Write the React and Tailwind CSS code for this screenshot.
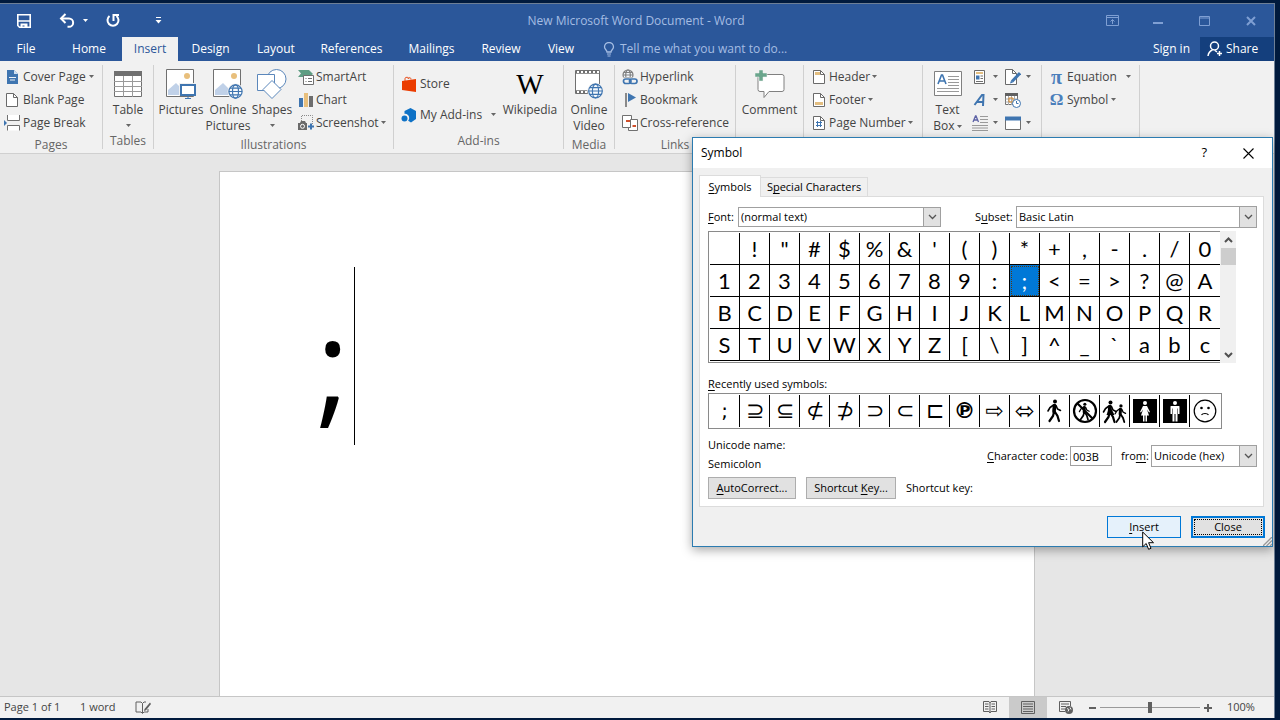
import React from "react";

const Svg = ({ w = 16, h = 16, vb, children, className = "" }) => (
  <svg width={w} height={h} viewBox={vb || `0 0 ${w} ${h}`} fill="none" aria-hidden="true" className={`shrink-0 ${className}`}>
    {children}
  </svg>
);

const Caret = ({ className = "" }) => (
  <Svg w={5} h={3} className={className}>
    <path d="M0 0h5L2.500 3z" fill="currentColor" />
  </Svg>
);

const Chevron = () => (
  <Svg w={9} h={6}>
    <path d="M1 1l3.500 3.500L8 1" stroke="#555" strokeWidth="1.300" />
  </Svg>
);

/* ---------- title bar icons ---------- */
const SaveIcon = () => (
  <Svg>
    <path d="M1.800 1.800h12.400v12.400H3.500L1.800 12.500z" stroke="#fff" strokeWidth="1.600" />
    <path d="M2 8h12" stroke="#fff" strokeWidth="1.500" />
    <path d="M4.500 10.500h7V15h-3v-2.500h-2V15h-2z" fill="#fff" />
  </Svg>
);
const UndoIcon = () => (
  <Svg>
    <path d="M2 5.500h8a4 4 0 0 1 0 8.300H8.500" stroke="#fff" strokeWidth="2" />
    <path d="M6.500 1L2 5.500 6.500 10" stroke="#fff" strokeWidth="2" />
  </Svg>
);
const RedoIcon = () => (
  <Svg>
    <path d="M4.500 3A5.500 5.500 0 1 0 11.500 3" stroke="#fff" strokeWidth="2" />
    <path d="M8.500 8V2H14" stroke="#fff" strokeWidth="2" />
  </Svg>
);
const CustomizeIcon = () => (
  <Svg w={7} h={7}>
    <path d="M1 .5h5" stroke="#fff" />
    <path d="M.5 3h6L3.500 6.500z" fill="#fff" />
  </Svg>
);

/* ---------- small ribbon icons ---------- */
const PageShape = ({ children }) => (
  <Svg>
    <path d="M2.500 1.500h7l4 4v9h-11z" fill="#fff" stroke="#6a6a6a" />
    <path d="M9.500 1.500v4h4" stroke="#6a6a6a" />
    {children}
  </Svg>
);
const CoverIcon = () => (
  <Svg>
    <path d="M3 1h7l4 4v10H3z" fill="#3f75b0" />
    <path d="M10 1v4h4z" fill="#cfe0f2" />
    <path d="M5 8l1 1 1-1 1 1 1-1 1 1 1-1 1 1M6 11h5" stroke="#fff" strokeWidth=".9" />
  </Svg>
);
const BreakIcon = () => (
  <Svg>
    <path d="M3.500 0v5.500h12V0M3.500 15.500v-5h12v5" stroke="#707070" fill="#fff" />
    <path d="M0 5l3 3-3 3z" fill="#3f75b0" />
  </Svg>
);
const SmartArtIcon = () => (
  <Svg>
    <path d="M0 1h11l4 4-4 3H0l3-3.500z" fill="#5f9d83" />
    <path d="M5.500 6.500h10v9h-10z" fill="#fff" stroke="#707070" />
    <path d="M7.500 9.500h1M10 9.500h4M7.500 12.500h1M10 12.500h4" stroke="#707070" />
  </Svg>
);
const ChartIcon = () => (
  <Svg>
    <path d="M1 6h4v9H1z" fill="#3f75b0" />
    <path d="M6 1h4v14H6z" fill="#e8bf7c" />
    <path d="M11 4h4v11h-4z" fill="#6d6d6d" />
  </Svg>
);
const ScreenshotIcon = () => (
  <Svg>
    <path d="M3.500 6V.5h11V9" stroke="#8a8a8a" strokeDasharray="1 1" />
    <path d="M0 8h2l1-2h4l1 2h1v7H0z" fill="#6a6a6a" />
    <circle cx="4.500" cy="11.300" r="2" stroke="#fff" />
    <path d="M13 8.500v6M10 11.500h6" stroke="#3f75b0" strokeWidth="2" />
  </Svg>
);
const StoreIcon = () => (
  <Svg>
    <path d="M4 5V2.500C4 .8 8 .8 8 3M7 3c.5-2 3-2 3 .5" stroke="#e8501e" />
    <path d="M1 5l14-2v13L1 14z" fill="#eb3c00" />
  </Svg>
);
const AddinsIcon = () => (
  <Svg>
    <path d="M9.500 1L15 4v8l-5 3.500-4-2.500V9.500L3.500 8V4z" fill="#0f72c6" />
    <circle cx="4" cy="11" r="4.200" fill="#f1f1f1" />
    <circle cx="3.500" cy="11.500" r="3" fill="#0f72c6" />
  </Svg>
);
const Globe = ({ cx, cy, r, color = "#3f75b0" }) => (
  <g stroke={color} strokeWidth="1.200">
    <circle cx={cx} cy={cy} r={r} fill="#f4f8fc" />
    <ellipse cx={cx} cy={cy} rx={r / 2.2} ry={r} />
    <path d={`M${cx - r} ${cy}h${2 * r}M${cx - r * 0.85} ${cy - r / 2}h${r * 1.7}M${cx - r * 0.85} ${cy + r / 2}h${r * 1.7}`} />
  </g>
);
const HyperlinkIcon = () => (
  <Svg>
    <Globe cx={6} cy={6} r={5} color="#808080" />
    <rect x="0" y="8.500" width="16" height="7.500" fill="#f1f1f1" />
    <rect x="1.500" y="10" width="7.500" height="4.500" rx="2.200" stroke="#3f75b0" strokeWidth="1.700" />
    <rect x="7.500" y="10" width="7.500" height="4.500" rx="2.200" stroke="#3f75b0" strokeWidth="1.700" />
  </Svg>
);
const BookmarkIcon = () => (
  <Svg>
    <path d="M4 1v14" stroke="#707070" strokeWidth="1.600" />
    <path d="M6 1l8 4.500L6 10z" fill="#3f75b0" />
  </Svg>
);
const CrossRefIcon = () => (
  <Svg>
    <path d="M.5.500h9v12h-9z" fill="#fff" stroke="#707070" />
    <path d="M8.500 4.500h7v11h-9v-3h2z" fill="#fff" stroke="#707070" />
    <path d="M4 6h4M10.500 11h3.500" stroke="#d0502c" strokeWidth="2" />
  </Svg>
);
const HeaderIcon = () => (<PageShape><path d="M4 3h5v3H4z" fill="#e3be80" /></PageShape>);
const FooterIcon = () => (<PageShape><path d="M4 10h8v3H4z" fill="#e3be80" /></PageShape>);
const PageNumIcon = () => (<PageShape><path d="M6.500 6v6M9.500 6v6M5 7.500h6M5 10.500h6" stroke="#3f75b0" /></PageShape>);
const QuickPartsIcon = () => (
  <Svg>
    <path d="M2.500 1.500h10v13h-10z" fill="#fff" stroke="#6a6a6a" />
    <path d="M4 4h7" stroke="#e3be80" strokeWidth="2" />
    <path d="M4 6.500h3.500v4H4z" fill="#3f75b0" />
    <path d="M8.500 7H11M8.500 9.500H11M4 12.500h7" stroke="#707070" />
  </Svg>
);
const WordArtIcon = () => (
  <Svg>
    <path d="M2.500 13L10 3h1.500L11 14M5 10h6" stroke="#3f75b0" strokeWidth="2" />
  </Svg>
);
const DropCapIcon = () => (
  <Svg>
    <path d="M1 7l2.500-6h.5l2.500 6M2 5h4" stroke="#5d62a5" strokeWidth="1.300" />
    <path d="M8 1.500h8M8 4.500h8M8 7.500h8M0 10.500h16M0 13h16M0 15.500h16" stroke="#9a9a9a" />
  </Svg>
);
const SignatureIcon = () => (
  <Svg>
    <path d="M.5.500h7l4 4v11H.5z" fill="#fff" stroke="#6a6a6a" />
    <path d="M7.500.500v4h4" stroke="#6a6a6a" />
    <path d="M15 4L7 12.500" stroke="#3f75b0" strokeWidth="3" />
    <path d="M5 14.500l1-3 2 2z" fill="#3f75b0" />
  </Svg>
);
const DateIcon = () => (
  <Svg>
    <path d="M.5 1.500h12v11H.5z" fill="#fff" stroke="#707070" />
    <path d="M0 2.500h13" stroke="#606060" strokeWidth="3" />
    <path d="M.5 7h12M.5 10h12M3.500 4v9M6.500 4v9M9.500 4v9" stroke="#aaa" />
    <path d="M4 6h4v4H4z" stroke="#d98a2b" />
    <circle cx="11.500" cy="11.500" r="4" fill="#fff" stroke="#3f75b0" />
    <path d="M11.500 9v2.500h2" stroke="#3f75b0" />
  </Svg>
);
const ObjectIcon = () => (
  <Svg>
    <path d="M.5 2.500h15v12H.5z" fill="#fff" stroke="#707070" />
    <path d="M0 3.500h16" stroke="#3f75b0" strokeWidth="4" />
  </Svg>
);

/* ---------- large ribbon icons ---------- */
const TableIcon = () => (
  <Svg w={28} h={26}>
    <path d="M.5.500h27v25H.5z" fill="#fff" stroke="#707070" />
    <path d="M0 0h28v5H0z" fill="#707070" />
    <path d="M0 10.500h28M0 15.500h28M0 20.500h28M9.500 5v21M18.500 5v21" stroke="#9a9a9a" />
  </Svg>
);
const PhotoBase = () => (
  <>
    <path d="M.5.500h27v27H.5z" fill="#fff" stroke="#707070" />
    <circle cx="21" cy="7" r="3" fill="#e8bf7c" />
    <path d="M2 26v-5l8-7 5 5v7z" fill="#c0d1e8" />
  </>
);
const PicturesIcon = () => (
  <Svg w={30} h={30}>
    <PhotoBase />
    <path d="M13 14h17v13H13z" fill="#f1f1f1" />
    <path d="M15 16h14v10H15z" fill="#fff" stroke="#3f75b0" strokeWidth="2" />
    <path d="M22 27v2M19 29.500h6" stroke="#3f75b0" />
  </Svg>
);
const OnlinePicturesIcon = () => (
  <Svg w={30} h={30}>
    <PhotoBase />
    <circle cx="22.500" cy="22.500" r="8" fill="#f1f1f1" />
    <Globe cx={22.5} cy={22.5} r={6.6} />
  </Svg>
);
const ShapesIcon = () => (
  <Svg w={30} h={30}>
    <circle cx="19.500" cy="10" r="9.500" fill="#fff" stroke="#5b87bb" />
    <path d="M.5 5.500h17v16H.5z" fill="#fff" stroke="#5b87bb" />
    <path d="M15 11.500l9 9-9 9-9-9z" fill="#fff" stroke="#5b87bb" />
  </Svg>
);
const VideoIcon = () => (
  <Svg w={28} h={30}>
    <path d="M.5 1.500h24v23H.5z" fill="#fff" stroke="#707070" />
    <path d="M1 3h23M1 23h13" stroke="#707070" strokeWidth="3.500" />
    <path d="M2 3h23M2 23h13" stroke="#fff" strokeWidth="2" strokeDasharray="2 2" />
    <circle cx="20.500" cy="22" r="8.200" fill="#f1f1f1" />
    <Globe cx={20.5} cy={22} r={6.8} />
  </Svg>
);
const CommentIcon = () => (
  <Svg w={30} h={30}>
    <path d="M5 5.500h22a2 2 0 0 1 2 2v13a2 2 0 0 1-2 2H14l-5 6v-6H5a2 2 0 0 1-2-2v-13a2 2 0 0 1 2-2z" fill="#fff" stroke="#808080" />
    <path d="M4 1h4v3h4v4H8v4H4V8H0V4h4z" fill="#6aa58c" stroke="#f1f1f1" strokeWidth=".5" />
  </Svg>
);
const TextBoxIcon = () => (
  <Svg w={28} h={26}>
    <path d="M.5.500h27v24H.5z" fill="#fff" stroke="#808080" />
    <path d="M4 13l3.500-9h1L12 13M5.500 10h5" stroke="#3f75b0" strokeWidth="1.600" />
    <path d="M14 5.500h11M14 8.500h11M14 11.500h11M14 14.500h11M3 17.500h22M3 20.500h22" stroke="#9a9a9a" />
  </Svg>
);

/* ---------- ribbon building blocks ---------- */
const Group = ({ label, width, children }) => (
  <section className={`my-1 flex h-[84px] shrink-0 flex-col border-r border-[#d0d0d0] ${width}`}>
    <div className="flex h-[69px]">{children}</div>
    {label && <div className="mt-[3px] text-center leading-4 text-[#666]">{label}</div>}
  </section>
);

const Small = ({ icon, label, caret, gap = "gap-[2px]", h = "h-[23px]", caretGap = "ml-1" }) => (
  <button type="button" className={`flex items-center whitespace-nowrap leading-4 ${gap} ${h}`}>
    {icon}
    <span>{label}</span>
    {caret && <Caret className={`text-[#666] ${caretGap}`} />}
  </button>
);

const Big = ({ icon, lines, caret, caretInline, width }) => (
  <button type="button" className={`flex shrink-0 flex-col items-center leading-4 ${width}`}>
    <span className="flex h-[37px] items-center">{icon}</span>
    {lines.map((l, i) => (
      <span key={l} className="flex items-center gap-[2px] whitespace-nowrap">
        {l}
        {caretInline && i === lines.length - 1 && <Caret className="text-[#666]" />}
      </span>
    ))}
    {caret && <Caret className="mt-[6px] text-[#666]" />}
  </button>
);

const IconDrop = ({ icon, label, caret = true }) => (
  <button type="button" aria-label={label} className="flex h-[23px] items-center gap-[5px]">
    {icon}
    {caret && <Caret className="text-[#666]" />}
  </button>
);

const TABS = [
  ["Design", "w-[65px]"],
  ["Layout", "w-[66px]"],
  ["References", "w-[85px]"],
  ["Mailings", "w-[75px]"],
  ["Review", "w-[64px]"],
  ["View", "w-[56px]"],
];

const TitleBar = () => (
  <header className="flex h-[33px] items-center text-white">
    <div className="flex flex-1 items-center pl-4">
      <button type="button" aria-label="Save"><SaveIcon /></button>
      <button type="button" aria-label="Undo" className="ml-[27px] flex items-center gap-2"><UndoIcon /><Caret /></button>
      <button type="button" aria-label="Repeat" className="ml-[17px]"><RedoIcon /></button>
      <button type="button" aria-label="Customize Quick Access Toolbar" className="ml-[34px]"><CustomizeIcon /></button>
    </div>
    <h1 className="pt-px text-[12px] text-[#a5bde3]">New Microsoft Word Document - Word</h1>
    <div className="flex flex-1 items-center justify-end gap-[34px] pr-[18px] text-[#7f9fd3]">
      <button type="button" aria-label="Ribbon Display Options">
        <Svg w={13} h={11}>
          <path d="M.5.500h12v10H.5zM.5 2.500h12M6.500 9V4.500M4.500 6.500l2-2 2 2" stroke="currentColor" />
        </Svg>
      </button>
      <button type="button" aria-label="Minimize">
        <Svg w={10} h={10}><path d="M0 7h10" stroke="currentColor" strokeWidth="2" /></Svg>
      </button>
      <button type="button" aria-label="Maximize" className="ml-[2px]">
        <Svg w={11} h={10}><path d="M.5.500h10v9H.5zM0 2h11" stroke="currentColor" /></Svg>
      </button>
      <button type="button" aria-label="Close window" className="ml-[2px]">
        <Svg w={10} h={10}><path d="M1 1l8 8M9 1L1 9" stroke="currentColor" strokeWidth="2" /></Svg>
      </button>
    </div>
  </header>
);

const TabBar = () => (
  <nav className="flex h-6 items-stretch text-white">
    <button type="button" className="w-[52px]">File</button>
    <button type="button" className="ml-1 w-[66px]">Home</button>
    <button type="button" className="w-14 bg-[#f1f1f1] text-[#2b579a]">Insert</button>
    {TABS.map(([t, w]) => (
      <button type="button" key={t} className={w}>{t}</button>
    ))}
    <button type="button" className="ml-[14px] flex items-center gap-[5px] text-[#a5bde3]">
      <Svg w={12} h={15}>
        <path d="M4 10C4 8 1.500 7.500 1.500 5a4.500 4.500 0 0 1 9 0C10.500 7.500 8 8 8 10z" stroke="currentColor" strokeWidth="1.300" />
        <path d="M4 12h4M4.500 14h3" stroke="currentColor" />
      </Svg>
      Tell me what you want to do...
    </button>
    <button type="button" className="mr-[10px] ml-auto">Sign in</button>
    <button type="button" className="flex w-[74px] items-center gap-1 bg-[#143f7d] pl-[7px]">
      <Svg w={15} h={16}>
        <circle cx="7.500" cy="5" r="4" stroke="#fff" strokeWidth="1.500" />
        <path d="M1 15c.5-3.500 2-5 4.500-6M10 12.500h5M12.500 10v5M8 9.500l2 1.500" stroke="#fff" strokeWidth="1.500" />
      </Svg>
      Share
    </button>
  </nav>
);

const Ribbon = () => (
  <div className="flex h-[93px] border-b border-[#d0d0d0] bg-[#f1f1f1] text-[#444]">
    <Group label="Pages" width="w-[103px]">
      <div className="flex flex-col items-start pl-1">
        <Small icon={<CoverIcon />} label="Cover Page" caret caretGap="" gap="gap-[3px]" />
        <Small icon={<PageShape />} label="Blank Page" gap="gap-[3px]" />
        <Small icon={<BreakIcon />} label="Page Break" gap="gap-[3px]" />
      </div>
    </Group>
    <Group label="Tables" width="w-[51px]">
      <Big icon={<TableIcon />} lines={["Table"]} caret width="w-[50px]" />
    </Group>
    <Group label="Illustrations" width="w-[240px]">
      <Big icon={<PicturesIcon />} lines={["Pictures"]} width="w-[54px]" />
      <Big icon={<OnlinePicturesIcon />} lines={["Online", "Pictures"]} width="w-[40px]" />
      <Big icon={<ShapesIcon />} lines={["Shapes"]} caret width="w-12" />
      <div className="flex flex-col items-start pl-[2px]">
        <Small icon={<SmartArtIcon />} label="SmartArt" />
        <Small icon={<ChartIcon />} label="Chart" />
        <Small icon={<ScreenshotIcon />} label="Screenshot" caret caretGap="" />
      </div>
    </Group>
    <Group label="Add-ins" width="w-[170px]">
      <div className="flex w-[110px] flex-col items-start pt-[3px] pl-[7px]">
        <Small icon={<StoreIcon />} label="Store" gap="gap-[3px]" h="h-[31px]" />
        <Small icon={<AddinsIcon />} label="My Add-ins" caret gap="gap-[3px]" h="h-[31px]" caretGap="ml-[6px]" />
      </div>
      <Big
        icon={<span className="font-[Liberation_Serif,serif] text-[29px] text-black">W</span>}
        lines={["Wikipedia"]}
        width="w-[52px]"
      />
    </Group>
    <Group label="Media" width="w-[51px]">
      <Big icon={<VideoIcon />} lines={["Online", "Video"]} width="w-[50px]" />
    </Group>
    <Group label="Links" width="w-[121px]">
      <div className="flex flex-col items-start pl-[7px]">
        <Small icon={<HyperlinkIcon />} label="Hyperlink" gap="gap-[2px]" />
        <Small icon={<BookmarkIcon />} label="Bookmark" gap="gap-[2px]" />
        <Small icon={<CrossRefIcon />} label="Cross-reference" gap="gap-[2px]" />
      </div>
    </Group>
    <Group width="w-[68px]">
      <Big icon={<CommentIcon />} lines={["Comment"]} width="w-[67px]" />
    </Group>
    <Group width="w-[119px]">
      <div className="flex flex-col items-start pl-[7px]">
        <Small icon={<HeaderIcon />} label="Header" caret gap="gap-[2px]" caretGap="" />
        <Small icon={<FooterIcon />} label="Footer" caret gap="gap-[2px]" caretGap="" />
        <Small icon={<PageNumIcon />} label="Page Number" caret gap="gap-[2px]" caretGap="" />
      </div>
    </Group>
    <Group width="w-[119px]">
      <Big icon={<TextBoxIcon />} lines={["Text", "Box"]} caretInline width="w-[49px]" />
      <div className="flex flex-col">
        <IconDrop icon={<QuickPartsIcon />} label="Quick Parts" />
        <IconDrop icon={<WordArtIcon />} label="WordArt" />
        <IconDrop icon={<DropCapIcon />} label="Drop Cap" />
      </div>
      <div className="ml-[7px] flex flex-col">
        <IconDrop icon={<SignatureIcon />} label="Signature Line" />
        <IconDrop icon={<DateIcon />} label="Date and Time" caret={false} />
        <IconDrop icon={<ObjectIcon />} label="Object" />
      </div>
    </Group>
    <Group width="w-[98px]">
      <div className="flex flex-col items-start pl-[7px]">
        <Small
          icon={<span className="w-[15px] text-center font-[Liberation_Serif,serif] text-[20px] leading-4 font-bold text-[#4a7ebb]">π</span>}
          label="Equation" caret gap="gap-[3px]" caretGap="ml-[6px]"
        />
        <Small
          icon={<span className="w-[15px] text-center font-[Liberation_Serif,serif] text-[17px] leading-4 font-bold text-[#4a7ebb]">Ω</span>}
          label="Symbol" caret gap="gap-[3px]" caretGap=""
        />
      </div>
    </Group>
  </div>
);

/* ---------- symbol dialog ---------- */
const CHARS = [
  " !\"#$%&'()*+,-./0",
  "123456789:;<=>?@A",
  "BCDEFGHIJKLMNOPQR",
  "STUVWXYZ[\\]^_`abc",
].map((r) => r.split(""));

const Walker = ({ color = "#000" }) => (
  <g stroke={color} strokeLinecap="round">
    <circle cx="12" cy="3.500" r="2" fill={color} stroke="none" />
    <path d="M11.500 7.500l-.5 6" strokeWidth="3.600" />
    <path d="M11 14l-1 4-3.500 5M12 14l2.500 4 1.500 5" strokeWidth="2.200" />
    <path d="M10.500 7L7 9.500 5 13M13 7.500l1.500 3.500 3 1.500" strokeWidth="1.600" />
  </g>
);
const WalkIcon = () => <Svg w={24} h={26}><Walker /></Svg>;
const NoWalkIcon = () => (
  <Svg w={26} h={26}>
    <g transform="translate(3.500 3.500) scale(.78)"><Walker /></g>
    <circle cx="13" cy="13" r="11" stroke="#000" strokeWidth="2.200" />
    <path d="M5 5l16 16" stroke="#000" strokeWidth="2.200" />
  </Svg>
);
const ChildrenIcon = () => (
  <Svg w={26} h={26}>
    <g transform="translate(-3.500 1)"><Walker /><path d="M8 16l3-8h1l4 8z" fill="#000" /></g>
    <g transform="translate(9 5) scale(.83)"><Walker /></g>
  </Svg>
);
const WomanIcon = () => (
  <Svg w={24} h={24}>
    <path d="M0 0h24v24H0z" fill="#000" />
    <circle cx="12" cy="4" r="2" fill="#fff" />
    <path d="M10 7h4l3 6-1 .5-2-3 2 6h-2v6h-1.500v-6h-1v6H10v-6H8l2-6-2 3-1-.5z" fill="#fff" />
  </Svg>
);
const ManIcon = () => (
  <Svg w={24} h={24}>
    <path d="M0 0h24v24H0z" fill="#000" />
    <circle cx="12" cy="4" r="2" fill="#fff" />
    <path d="M8.500 7h7c1 0 1 .5 1 1v7H15V9.500h-.5v13h-2V15h-1v7.500h-2v-13H9V15H7.500V8c0-.5 0-1 1-1z" fill="#fff" />
  </Svg>
);
const FrownIcon = () => (
  <Svg w={24} h={24}>
    <circle cx="12" cy="12" r="10.800" stroke="#000" strokeWidth="1.200" />
    <circle cx="8.500" cy="9" r="1.300" fill="#000" />
    <circle cx="15.500" cy="9" r="1.300" fill="#000" />
    <path d="M8.500 16c1.200-2 5.800-2 7 0" stroke="#000" strokeWidth="1.200" />
  </Svg>
);

const MATH = "font-extralight text-[22px]";
const RECENT = [
  [";", "Semicolon", "text-[20px]"],
  ["⊇", "Superset or equal", MATH],
  ["⊆", "Subset or equal", MATH],
  ["⊄", "Not a subset", MATH],
  ["⊅", "Not a superset", MATH],
  ["⊃", "Superset", MATH],
  ["⊂", "Subset", MATH],
  ["⊏", "Square image", MATH],
  ["℗", "Sound recording copyright", "text-[22px] font-bold"],
  ["⇨", "Rightwards white arrow", "text-[22px]"],
  ["⬄", "Left right white arrow", "text-[24px]"],
  [<WalkIcon />, "Pedestrian", ""],
  [<NoWalkIcon />, "No pedestrians", ""],
  [<ChildrenIcon />, "Children crossing", ""],
  [<WomanIcon />, "Womens symbol", ""],
  [<ManIcon />, "Mens symbol", ""],
  [<FrownIcon />, "Frowning face", ""],
];

const U = ({ children }) => <span className="underline underline-offset-2">{children}</span>;

const Combo = ({ id, value, className }) => (
  <div className={`relative ${className}`}>
    <select id={id} defaultValue={value} className="block h-full w-full appearance-none border border-[#a0a0a0] bg-white pl-[2px] text-black">
      <option>{value}</option>
    </select>
    <span className="pointer-events-none absolute inset-y-0 right-0 flex w-[18px] items-center justify-center border border-[#a0a0a0] bg-[#e1e1e1]">
      <Chevron />
    </span>
  </div>
);

const dialogBtn = "border border-[#adadad] bg-[#e1e1e1]";

const SymbolDialog = () => (
  <div role="dialog" aria-labelledby="dlg-title" className="absolute top-[137px] left-[692px] w-[581px] border border-[#2b7bb0] bg-[#f0f0f0] text-[11px] text-black shadow-[0_3px_10px_rgba(0,0,0,0.35)]">
    <div className="flex h-[30px] items-center bg-white pr-[18px] pl-2">
      <h2 id="dlg-title" className="text-[12px]">Symbol</h2>
      <button type="button" aria-label="Help" className="ml-auto text-[13px]">?</button>
      <button type="button" aria-label="Close dialog" className="ml-9">
        <Svg w={11} h={11}><path d="M.5.500l10 10M10.500.500l-10 10" stroke="#000" strokeWidth="1.100" /></Svg>
      </button>
    </div>

    <div className="pt-[7px] pr-2 pl-[6px]">
      <div role="tablist" className="relative z-10 -mb-px flex items-end">
        <button type="button" role="tab" aria-selected="true" className="h-[22px] w-[62px] border border-b-0 border-[#dcdcdc] bg-white pt-[2px]"><U>S</U>ymbols</button>
        <button type="button" role="tab" aria-selected="false" className="mb-px h-[19px] w-[107px] border border-b-0 border-l-0 border-[#dcdcdc] pt-px">S<U>p</U>ecial Characters</button>
      </div>

      <div role="tabpanel" className="border border-[#dcdcdc] bg-white pt-[9px] pr-[6px] pb-[7px] pl-2">
        <div className="flex h-[22px] items-center">
          <label htmlFor="font" className="w-[30px] whitespace-nowrap"><U>F</U>ont:</label>
          <Combo id="font" value="(normal text)" className="h-5 w-[203px]" />
          <label htmlFor="subset" className="ml-auto w-[41px] whitespace-nowrap">S<U>u</U>bset:</label>
          <Combo id="subset" value="Basic Latin" className="h-[22px] w-[241px]" />
        </div>

        <div className="mt-[3px] flex">
          <div className="border-y border-l border-[#8a8a8a] p-px pr-0">
            <div className="grid grid-cols-[repeat(17,30px)] font-[Lato,sans-serif] text-[22px]">
              {CHARS.flatMap((row, r) =>
                row.map((c, i) => {
                  const on = c === ";";
                  return (
                    <button
                      type="button"
                      key={`${r}-${i}`}
                      aria-label={c === " " ? "Space" : undefined}
                      className={`h-8 border-b border-black leading-[31px] ${i < 16 ? "border-r" : ""} ${on ? "bg-[#0078d7] text-white outline-1 -outline-offset-2 outline-dotted outline-[#5a3a10]" : ""}`}
                    >
                      {c}
                    </button>
                  );
                })
              )}
            </div>
          </div>
          <div className="flex w-4 flex-col items-center bg-[#f0f0f0]">
            <button type="button" aria-label="Scroll up" className="flex h-[17px] items-center">
              <Svg w={9} h={6}><path d="M1 5l3.500-3.500L8 5" stroke="#505050" strokeWidth="2" /></Svg>
            </button>
            <div className="h-[17px] w-[15px] bg-[#cdcdcd]" />
            <button type="button" aria-label="Scroll down" className="mt-auto flex h-[17px] items-center">
              <Svg w={9} h={6}><path d="M1 1l3.500 3.500L8 1" stroke="#505050" strokeWidth="2" /></Svg>
            </button>
          </div>
        </div>

        <p className="mt-[13px] leading-4"><U>R</U>ecently used symbols:</p>
        <div className="mt-px flex w-[514px] border border-[#8a8a8a] p-px">
          {RECENT.map(([s, name, style], i) => (
            <button
              type="button"
              key={name}
              aria-label={name}
              className={`flex h-8 w-[30px] items-center justify-center font-[DejaVu_Sans,sans-serif] leading-none ${style} ${i < 16 ? "border-r border-black" : ""}`}
            >
              {s}
            </button>
          ))}
        </div>

        <div className="mt-2 flex items-start justify-between">
          <div className="leading-4">
            <p>Unicode name:</p>
            <p className="mt-[3px]">Semicolon</p>
          </div>
          <div className="mt-2 flex h-[22px] items-center">
            <label htmlFor="code" className="w-[83px] whitespace-nowrap"><U>C</U>haracter code:</label>
            <input id="code" defaultValue="003B" className="h-5 w-[42px] border border-[#a0a0a0] bg-white px-[2px]" />
            <label htmlFor="from" className="ml-[9px] w-[30px] whitespace-nowrap">fro<U>m</U>:</label>
            <Combo id="from" value="Unicode (hex)" className="h-[22px] w-[106px]" />
          </div>
        </div>

        <div className="mt-[5px] flex h-[22px] items-center">
          <button type="button" className={`h-[22px] w-[88px] ${dialogBtn}`}><U>A</U>utoCorrect...</button>
          <button type="button" className={`ml-[10px] h-[22px] w-[90px] ${dialogBtn}`}>Shortcut <U>K</U>ey...</button>
          <span className="ml-[10px]">Shortcut key:</span>
        </div>
      </div>
    </div>

    <div className="flex justify-end gap-[10px] pt-[9px] pr-[7px] pb-2">
      <button type="button" className="h-[22px] w-[74px] border border-[#0078d7] bg-[#e5f1fb]"><U>I</U>nsert</button>
      <button type="button" className="h-[22px] w-[74px] border-2 border-[#0078d7] bg-[#e1e1e1] outline-1 -outline-offset-4 outline-dotted outline-black">Close</button>
    </div>

    <Svg w={9} h={9} className="absolute right-0 bottom-0">
      <path d="M0 9l9-9M3.500 9L9 3.500M7 9l2-2" stroke="#999" strokeWidth="1.300" />
    </Svg>
    <Svg w={13} h={20} className="absolute top-[393px] left-[449px]">
      <path d="M.7 1v14.800l3.500-3.300 2.400 5.800 2.400-1-2.400-5.600h4.900z" fill="#fff" stroke="#000" />
    </Svg>
  </div>
);

const StatusBar = () => (
  <footer className="flex h-[22px] items-center border-t border-[#c6c6c6] bg-[#f1f1f1] pl-1 text-[11px] text-[#444]">
    <span className="w-[76px]">Page 1 of 1</span>
    <span className="w-[55px]">1 word</span>
    <button type="button" aria-label="Proofing errors">
      <Svg w={16} h={13}>
        <path d="M7.500 2.500v9.500M7.500 2.500L6 1H1v10h5l1.500 1.500L9 11h4V8M7.500 2.500L9 1h2" stroke="#606060" />
        <path d="M15 1.500L9.500 8l-.5 2 2-.8L16 3" fill="#606060" />
      </Svg>
    </button>
    <div className="ml-auto flex items-center self-stretch">
      <button type="button" aria-label="Read Mode" className="flex w-[38px] justify-center">
        <Svg w={14} h={13}>
          <path d="M7 2L6 .5H.5v10H6L7 12l1-1.500h5.500V.5H8zM7 2v10M2 3h3.500M2 5.500h3.500M2 8h3.500M8.500 3H12M8.500 5.500H12M8.500 8H12" stroke="#606060" />
        </Svg>
      </button>
      <button type="button" aria-label="Print Layout" className="flex w-[38px] items-center justify-center self-stretch bg-[#cacaca]">
        <Svg w={14} h={13}><path d="M.5.500h13v12H.5zM2 3h10M2 5.500h10M2 8h10M2 10.500h10" stroke="#606060" /></Svg>
      </button>
      <button type="button" aria-label="Web Layout" className="flex w-[38px] justify-center">
        <Svg w={14} h={13}>
          <path d="M6 10.500H.5V.500h11V5M2 3h8M2 5.500h5M2 8h4" stroke="#606060" />
          <circle cx="10" cy="9" r="4" fill="#606060" />
          <path d="M8 7.500l2 1-1 2M11 6.500l1 2" stroke="#f1f1f1" />
        </Svg>
      </button>
      <button type="button" aria-label="Zoom out" className="ml-1">
        <Svg w={7} h={8}><path d="M0 4h7" stroke="#606060" strokeWidth="2" /></Svg>
      </button>
      <input
        type="range"
        aria-label="Zoom"
        defaultValue="50"
        className="mx-1 h-px w-[100px] appearance-none bg-[#9a9a9a] [&::-webkit-slider-thumb]:h-[11px] [&::-webkit-slider-thumb]:w-1 [&::-webkit-slider-thumb]:appearance-none [&::-webkit-slider-thumb]:bg-[#606060]"
      />
      <button type="button" aria-label="Zoom in">
        <Svg w={8} h={8}><path d="M0 4h8M4 0v8" stroke="#606060" strokeWidth="2" /></Svg>
      </button>
      <span className="w-[62px] pl-[15px]">100%</span>
    </div>
  </footer>
);

export default function App() {
  return (
    <div className="relative flex h-screen flex-col overflow-hidden bg-[#001a3d] pt-[3px] pr-[5px] pb-[2px] font-['Open_Sans','Noto_Sans',sans-serif] text-[12px]">
      <div className="flex min-h-0 flex-1 flex-col border-t border-r border-[#6d7f96] bg-[#2b579a]">
        <TitleBar />
        <TabBar />
        <Ribbon />
        <main className="min-h-0 flex-1 overflow-hidden bg-[#e6e6e6] pt-[17px] pr-5">
          <article className="mx-auto h-full w-[816px] border border-b-0 border-[#c6c6c6] bg-white pt-[95px] pl-24">
            <span className="inline-block border-r border-black pt-[10px] pr-1 text-[129px] leading-[168px] text-black">;</span>
          </article>
        </main>
        <StatusBar />
      </div>
      <SymbolDialog />
    </div>
  );
}
